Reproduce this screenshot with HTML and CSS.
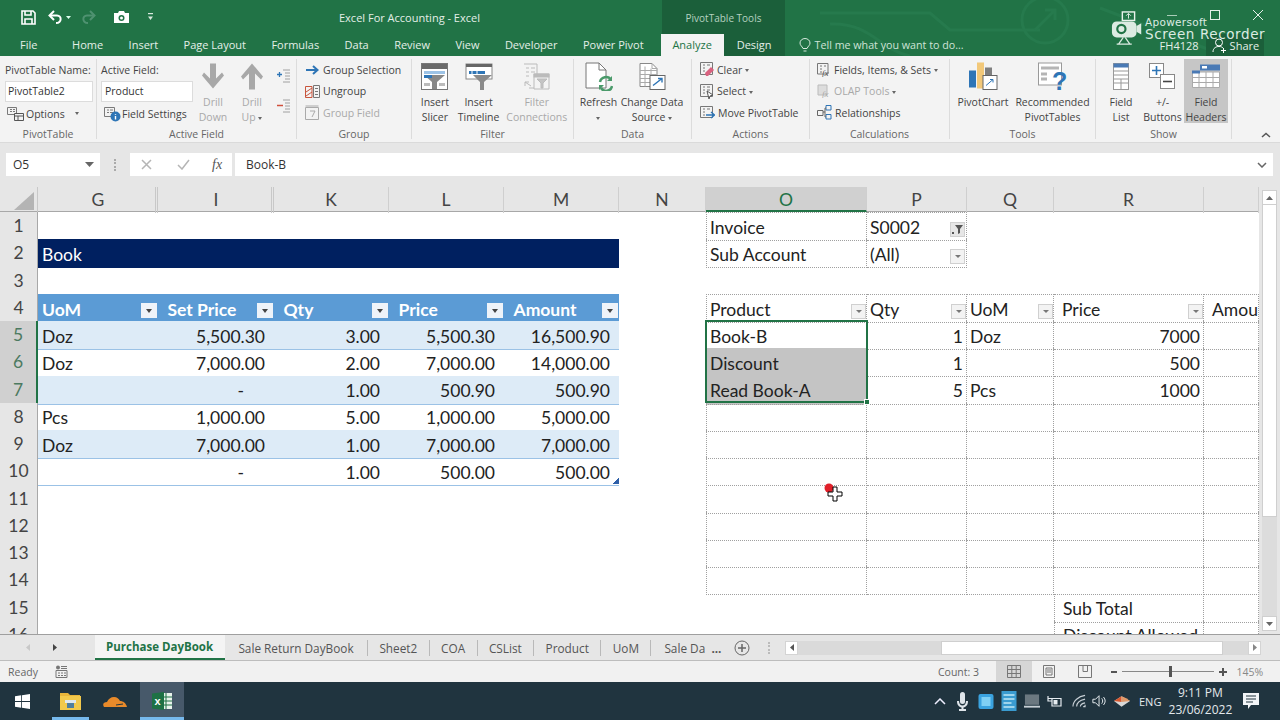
FILE: index.html
```html
<!DOCTYPE html>
<html lang="en">
<head>
<meta charset="utf-8">
<title>Excel For Accounting - Excel</title>
<link rel="stylesheet" href="styles.css">
</head>
<body>
<div class="app">
  <header class="chrome">
    <svg class="circuit" width="470" height="56" viewBox="0 0 470 56" fill="none" stroke="#267a4d" stroke-width="3"><path d="M10 13H120L140 30H230"/><path d="M20 24C60 22 70 50 100 56"/><circle cx="235" cy="20" r="23"/><path d="M225 30L245 10M235 10H245V20"/><path d="M290 8L400 50"/></svg>
    <div class="titlebar">
      <div class="title-left">
        <div class="qat">
          <svg class="q-save" width="15" height="15" viewBox="0 0 15 15" fill="none" stroke="#fff" stroke-width="1.6"><path d="M1 1H12L14 3V14H1Z"/><path d="M4 1V5H10V1M4 14V9H11V14"/></svg>
          <svg class="q-undo" width="24" height="15" viewBox="0 0 24 15" fill="none"><path d="M2 5.500H9C14 5.500 14 13 8 13" stroke="#fff" stroke-width="2"/><path d="M6 1L1.500 5.500L6 10" stroke="#fff" stroke-width="2"/><path d="M18 6H23L20.500 9Z" fill="#dfe"/></svg>
          <svg class="q-redo" width="24" height="15" viewBox="0 0 24 15" fill="none" stroke="#4f9271" stroke-width="2"><path d="M13 5.500H7C2 5.500 2 13 8 13"/><path d="M10 1L14.500 5.500L10 10"/></svg>
          <svg class="q-cam" width="17" height="14" viewBox="0 0 17 14"><path d="M1 3H5L6 1H11L12 3H16V13H1Z" fill="#fff"/><circle cx="8.500" cy="8" r="3" fill="#217346"/><circle cx="8.500" cy="8" r="1.500" fill="#fff"/></svg>
          <svg class="q-more" width="7" height="8" viewBox="0 0 7 8" fill="#d8e8de"><rect x="1" y="0" width="5" height="1.200"/><path d="M1 3.500H6L3.500 7Z"/></svg>
        </div>
        <div class="doc-title">Excel For Accounting - Excel</div>
      </div>
      <div class="context-title">PivotTable Tools</div>
      <div class="win-btns">
        <svg width="12" height="12" viewBox="0 0 12 12" stroke="#a9cdb8" fill="none"><path d="M1 6.500H11"/></svg>
        <svg width="12" height="12" viewBox="0 0 12 12" stroke="#e6f0ea" fill="none"><rect x="1.500" y="1.500" width="9" height="9"/></svg>
        <svg width="12" height="12" viewBox="0 0 12 12" stroke="#e6f0ea" fill="none"><path d="M1 1L11 11M11 1L1 11"/></svg>
      </div>
    </div>
    <nav class="tabs">
      <span class="tab tab-file">File</span><span class="tab">Home</span><span class="tab">Insert</span><span class="tab">Page Layout</span><span class="tab">Formulas</span><span class="tab">Data</span><span class="tab">Review</span><span class="tab">View</span><span class="tab">Developer</span><span class="tab tab-last">Power Pivot</span><span class="tab tab-active">Analyze</span><span class="tab tab-design">Design</span>
      <span class="tellme">
        <svg width="12" height="15" viewBox="0 0 12 15" fill="none" stroke="#d8eadf"><path d="M4 10.500C3 8 1 7.500 1 5A5 4.500 0 0 1 11 5C11 7.500 9 8 8 10.500ZM4.500 13H7.500"/></svg>
        Tell me what you want to do...
      </span>
      <span class="user">FH4128</span>
      <span class="share">
        <svg width="15" height="15" viewBox="0 0 15 15" fill="none" stroke="#fff"><circle cx="7" cy="4.500" r="3.500"/><path d="M1 14C1 10 4 8.500 7 8.500C9 8.500 10 9 11 10M9 12.500H14M11.500 10V15"/></svg>
        Share
      </span>
    </nav>
    <div class="watermark">
      <svg class="wm-cam" width="34" height="36" viewBox="0 0 36 36"><rect x="12" y="1" width="13" height="9" fill="none" stroke="#e9f3ec" stroke-width="1.500"/><path d="M18.500 8V3M16 5L18.500 2.500L21 5" fill="none" stroke="#e9f3ec"/><rect x="1" y="11" width="26" height="17" rx="5" fill="#dcebe2"/><path d="M27 16L32 13V25L27 22Z" fill="#dcebe2"/><circle cx="11" cy="19" r="5.500" fill="#217346"/><circle cx="11" cy="19" r="3.200" fill="#dcebe2"/><path d="M13 28L8 35M15 28L20 35M6 35H22" stroke="#dcebe2" fill="none" stroke-width="1.300"/></svg>
      <div class="wm-text"><span class="wm-a">Apowersoft</span><span class="wm-b">Screen Recorder</span></div>
    </div>
  </header>

  <section class="ribbon">
    <div class="grp g-pivot">
      <div class="grp-body col-body">
        <div class="row-item plain">PivotTable Name:</div>
        <div class="field f-name">PivotTable2</div>
        <div class="row-item opts">
          <svg width="17" height="15" viewBox="0 0 17 15" fill="none" stroke="#7a7a7a"><path d="M.5 1.500H9.500V8.500H.5ZM3 3.500H5M6 3.500H8M3 5.500H5M6 5.500H8"/><path d="M7.500 7.500H16.500V14.500H7.500ZM7.500 10H16.500M11 10V14.500" stroke="#555" fill="#f3f3f3"/></svg>
          <span>Options</span><i class="caret cap"></i>
        </div>
      </div>
      <div class="grp-label">PivotTable</div>
    </div>
    <div class="grp g-active">
      <div class="grp-body">
        <div class="col-body af-col">
          <div class="row-item plain">Active Field:</div>
          <div class="field f-prod">Product</div>
          <div class="row-item fset">
            <svg width="17" height="16" viewBox="0 0 17 16" fill="none" stroke="#7a7a7a"><path d="M.5 1.500H10.500V10.500H.5ZM3 4H5M6 4H9M3 6.500H5M6 6.500H9"/><circle cx="11.500" cy="10.500" r="5" fill="#2e75b6" stroke="none"/><path d="M11.500 8V8.800M11.500 10V13.500" stroke="#fff" stroke-width="1.400"/></svg>
            <span>Field Settings</span>
          </div>
        </div>
        <div class="big off b-drill1"><svg width="22" height="26" viewBox="0 0 22 26" fill="#a8a8a8"><path d="M8 0H14V15L20 9L22 12L11 25L0 12L2 9L8 15Z"/></svg><span>Drill<br>Down</span></div>
        <div class="big off b-drill2"><svg width="22" height="26" viewBox="0 0 22 26" fill="#a8a8a8"><path d="M8 26H14V10L20 16L22 13L11 0L0 13L2 16L8 10Z"/></svg><span>Drill<br>Up <i class="caret"></i></span></div>
        <div class="mini-col">
          <svg width="15" height="15" viewBox="0 0 15 15" fill="none" stroke="#a0a0a0"><path d="M7 2H14M9 5H14M9 8H14M9 11H14M7 14H14"/><path d="M1 6.500H6M3.500 4V9" stroke="#2e75b6" stroke-width="1.300"/></svg>
          <svg width="15" height="15" viewBox="0 0 15 15" fill="none" stroke="#a0a0a0"><path d="M7 2H14M9 5H14M9 8H14M9 11H14M7 14H14"/><path d="M1 7.500H7" stroke="#d0503c" stroke-width="1.500"/></svg>
        </div>
      </div>
      <div class="grp-label">Active Field</div>
    </div>
    <div class="grp g-group">
      <div class="grp-body col-body">
        <div class="row-item"><svg width="15" height="14" viewBox="0 0 15 14" fill="none" stroke="#2e75b6" stroke-width="2"><path d="M1 7H12M8 3L12.500 7L8 11"/></svg><span>Group Selection</span></div>
        <div class="row-item"><svg width="15" height="15" viewBox="0 0 15 15" fill="none"><path d="M.5 2.500H7V13.500H.5Z" stroke="#c8553d"/><path d="M1 8L7 4M1 12L7 8" stroke="#c8553d"/><path d="M8.500 1.500H14.500V13.500H8.500ZM10 4.500H13M10 7.500H13M10 10.500H13" stroke="#777"/></svg><span>Ungroup</span></div>
        <div class="row-item off"><svg width="15" height="15" viewBox="0 0 15 15" fill="none" stroke="#aaa"><path d="M.5 2.500H13.500V14.500H.5ZM.5 1H13.500M5 6H10L7 12"/></svg><span>Group Field</span></div>
      </div>
      <div class="grp-label">Group</div>
    </div>
    <div class="grp g-filter">
      <div class="grp-body">
        <div class="big b-slicer"><svg width="27" height="27" viewBox="0 0 27 27"><rect x=".5" y=".5" width="26" height="26" fill="#fff" stroke="#777"/><rect x="1" y="1" width="25" height="5" fill="#6a6a6a"/><rect x="3" y="8" width="21" height="3" fill="#9dc3e6"/><path d="M3 12H24L16 19V26H11V19Z" fill="#888"/><rect x="3" y="12" width="8" height="3" fill="#2e75b6"/><rect x="3" y="20" width="6" height="3" fill="#bbb"/><rect x="18" y="20" width="6" height="3" fill="#bbb"/></svg><span>Insert<br>Slicer</span></div>
        <div class="big b-timeline"><svg width="28" height="27" viewBox="0 0 28 27"><rect x="1" y="1" width="26" height="15" fill="#fff" stroke="#888"/><rect x="1" y="1" width="26" height="3" fill="#666"/><path d="M4 8H20V11H4Z" fill="#2e75b6"/><path d="M7 8V11M12 8V11" stroke="#fff"/><path d="M8 12H27L19 19V27H15V19Z" fill="#8a8a8a"/></svg><span>Insert<br>Timeline</span></div>
        <div class="big off b-conn"><svg width="27" height="27" viewBox="0 0 27 27" fill="none" stroke="#bbb"><path d="M1 1H14V25H6"/><path d="M3 5H6M8 5H12M3 9H6M8 9H12M3 13H6"/><path d="M11 11H26V26H11Z" fill="#f3f3f3"/><rect x="11" y="11" width="15" height="3" fill="#bbb"/><path d="M14 16H24L20 20V25H18V20Z" fill="#c4c4c4"/><path d="M8 23L2 19M2 23V19H6"/></svg><span>Filter<br>Connections</span></div>
      </div>
      <div class="grp-label">Filter</div>
    </div>
    <div class="grp g-data">
      <div class="grp-body">
        <div class="big b-refresh"><svg width="28" height="29" viewBox="0 0 28 29" fill="none"><path d="M1 1H14L21 8V26H1Z" fill="#fff" stroke="#777"/><path d="M14 1V8H21" stroke="#777"/><path d="M15 20A6 6 0 0 1 26 18M27 24A6 6 0 0 1 16 26" stroke="#4a9a6a" stroke-width="2.500"/><path d="M27 14V19H22M14 28V23H19" fill="#4a9a6a"/></svg><span>Refresh<br><i class="caret"></i></span></div>
        <div class="big b-change"><svg width="27" height="28" viewBox="0 0 27 28" fill="none" stroke="#888"><path d="M1 1H13L18 6V24H1Z" fill="#fff"/><path d="M13 1V6H18M1 8H18M1 12H18M1 16H18M1 20H18M6 4V24M12 6V24" stroke="#aaa"/><rect x="11" y="13" width="15" height="14" fill="#fff" stroke="#666"/><path d="M14 23L23 16M19 16H23V20" stroke="#2e75b6" stroke-width="1.400"/></svg><span>Change Data<br>Source <i class="caret"></i></span></div>
      </div>
      <div class="grp-label">Data</div>
    </div>
    <div class="grp g-actions">
      <div class="grp-body col-body">
        <div class="row-item"><svg width="14" height="15" viewBox="0 0 14 15" fill="none" stroke="#777"><path d="M.5 .5H12.500V12.500H.5ZM3 3H5M7 3H10M3 6H5M3 9H5"/><path d="M5 11L11 5L14 8L8 14H6Z" fill="#d9627f" stroke="none"/></svg><span>Clear <i class="caret"></i></span></div>
        <div class="row-item"><svg width="14" height="15" viewBox="0 0 14 15" fill="none" stroke="#777"><path d="M.5 .5H12.500V12.500H.5ZM3 3H5M7 3H10M3 6H5M3 9H5M7 6H10"/><path d="M7 7L13 11L10 12L9 15Z" fill="#fff" stroke="#555"/></svg><span>Select <i class="caret"></i></span></div>
        <div class="row-item"><svg width="15" height="14" viewBox="0 0 15 14" fill="none" stroke="#777"><path d="M.5 .5H12.500V11.500H.5ZM3 3H5M7 3H10M3 6H5M3 9H5"/><path d="M6 9H14M11 6L14.500 9L11 12" stroke="#2e75b6" stroke-width="1.300"/></svg><span>Move PivotTable</span></div>
      </div>
      <div class="grp-label">Actions</div>
    </div>
    <div class="grp g-calc">
      <div class="grp-body col-body">
        <div class="row-item"><svg width="14" height="14" viewBox="0 0 14 14" fill="none" stroke="#777"><path d="M.5 .5H11V11H.5ZM3 3H5M7 3H9M3 6H5M3 9H5"/><text x="5" y="13" class="fx-mini">fx</text></svg><span>Fields, Items, &amp; Sets <i class="caret"></i></span></div>
        <div class="row-item off"><svg width="14" height="14" viewBox="0 0 14 14" fill="none" stroke="#bbb"><path d="M1 1H10V11H1Z" fill="#ddd"/><text x="5" y="13" class="fx-mini off-fx">fx</text></svg><span>OLAP Tools <i class="caret"></i></span></div>
        <div class="row-item"><svg width="15" height="15" viewBox="0 0 15 15" fill="none" stroke="#666"><path d="M.5 5.500H6V10.500H.5Z"/><path d="M9 .5H14V5H9ZM9 9.500H14V14H9Z" stroke="#2e75b6"/><path d="M6 7H8M8 3V12H9M8 3H9"/></svg><span>Relationships</span></div>
      </div>
      <div class="grp-label">Calculations</div>
    </div>
    <div class="grp g-tools">
      <div class="grp-body">
        <div class="big b-chart"><svg width="29" height="28" viewBox="0 0 29 28"><rect x="0" y="8" width="7" height="17" fill="#2e75b6"/><rect x="8" y="0" width="7" height="26" fill="#f2c879"/><rect x="16" y="5" width="7" height="8" fill="#7f7f7f"/><rect x="14" y="13" width="14" height="14" fill="#fff" stroke="#666"/><path d="M17 23L24 17M21 17H24V20" stroke="#2e75b6" fill="none"/></svg><span>PivotChart</span></div>
        <div class="big b-recom"><svg width="29" height="28" viewBox="0 0 29 28" fill="none"><rect x=".5" y=".5" width="23" height="22" fill="#fff" stroke="#999"/><path d="M3 4H21V7H3ZM3 10H9V13H3ZM3 15H9V18H3Z" fill="#b5b5b5"/><text x="14" y="27" class="qmark">?</text></svg><span>Recommended<br>PivotTables</span></div>
      </div>
      <div class="grp-label">Tools</div>
    </div>
    <div class="grp g-show">
      <div class="grp-body">
        <div class="big b-flist"><svg width="16" height="27" viewBox="0 0 16 27" fill="#fff" stroke="#999"><rect x=".5" y=".5" width="15" height="26"/><rect x=".5" y=".5" width="15" height="4" fill="#4a7ab5" stroke="none"/><path d="M1 8H15M1 12H15M1 16H15M1 20H15M8 16V26" fill="none"/></svg><span>Field<br>List</span></div>
        <div class="big b-btns"><svg width="27" height="27" viewBox="0 0 27 27" fill="#fff" stroke="#888"><rect x=".5" y=".5" width="14" height="14"/><rect x="11.500" y="11.500" width="14" height="14"/><path d="M3 7.500H12M7.500 3V12" stroke="#2e75b6" stroke-width="1.600" fill="none"/><path d="M14 18.500H23" stroke="#444" stroke-width="1.600" fill="none"/></svg><span>+/-<br>Buttons</span></div>
        <div class="big b-fhead"><svg width="28" height="24" viewBox="0 0 28 24" fill="#fff" stroke="#aaa"><path d="M.5 7.500H27.500V23H.5ZM.5 13H27.500M.5 18H27.500M7 7.500V23M14 7.500V23M21 7.500V23"/><rect x="0" y="6" width="8" height="3" fill="#4a7ab5" stroke="none"/><rect x="8" y="0" width="20" height="6" fill="#4a7ab5" stroke="none"/><rect x="10" y="1.500" width="5" height="2.500" fill="#fff" stroke="none"/></svg><span>Field<br>Headers</span></div>
      </div>
      <div class="grp-label">Show</div>
    </div>
    <div class="collapse"><svg width="10" height="6" viewBox="0 0 10 6" fill="none" stroke="#555" stroke-width="1.500"><path d="M1 5L5 1.500L9 5"/></svg></div>
  </section>

  <section class="fbar">
    <div class="namebox"><span>O5</span><svg width="9" height="5" viewBox="0 0 9 5" fill="#666"><path d="M0 0H9L4.500 5Z"/></svg></div>
    <div class="fdots"></div>
    <div class="fbtns">
      <svg width="11" height="11" viewBox="0 0 11 11" fill="none" stroke="#b5b5b5" stroke-width="1.500"><path d="M1 1L10 10M10 1L1 10"/></svg>
      <svg width="13" height="11" viewBox="0 0 13 11" fill="none" stroke="#b5b5b5" stroke-width="1.500"><path d="M1 6L5 10L12 1"/></svg>
      <i class="fx">fx</i>
    </div>
    <div class="finput"><span>Book-B</span><svg width="10" height="6" viewBox="0 0 10 6" fill="none" stroke="#666" stroke-width="1.500"><path d="M1 1L5 5L9 1"/></svg></div>
  </section>

  <section class="sheet">
    <div class="grid">
      <div class="row hdr">
        <div class="corner"><svg width="20" height="18" viewBox="0 0 20 18"><path d="M20 0V18H0Z" fill="#b4b4b4"/></svg></div>
        <div class="ch ch-hid">G</div><div class="ch ch-hid">I</div><div class="ch">K</div><div class="ch">L</div><div class="ch">M</div><div class="ch">N</div><div class="ch ch-sel">O</div><div class="ch">P</div><div class="ch">Q</div><div class="ch">R</div><div class="ch"></div>
      </div>

      <div class="row"><div class="rh">1</div><div class="c"></div><div class="c"></div><div class="c"></div><div class="c"></div><div class="c"></div><div class="c"></div><div class="c p pl pt">Invoice</div><div class="c p pt val">S0002<i class="fbtn filt"><svg width="11" height="9" viewBox="0 0 11 9"><path d="M3 0H11L8 4V8L6 9V4Z" fill="#555"/><rect x="0" y="7" width="2" height="2" fill="#555"/></svg></i></div><div class="c"></div><div class="c"></div><div class="c"></div></div>
      <div class="row"><div class="rh">2</div><div class="c band-book">Book</div><div class="c"></div><div class="c p pl">Sub Account</div><div class="c p val">(All)<i class="fbtn"><b></b></i></div><div class="c"></div><div class="c"></div><div class="c"></div></div>
      <div class="row"><div class="rh">3</div><div class="c"></div><div class="c"></div><div class="c"></div><div class="c"></div><div class="c"></div><div class="c"></div><div class="c"></div><div class="c"></div><div class="c"></div><div class="c"></div><div class="c"></div></div>
      <div class="row"><div class="rh">4</div><div class="c th">UoM<i class="tbtn"><b></b></i></div><div class="c th">Set Price<i class="tbtn"><b></b></i></div><div class="c th">Qty<i class="tbtn"><b></b></i></div><div class="c th">Price<i class="tbtn"><b></b></i></div><div class="c th">Amount<i class="tbtn"><b></b></i></div><div class="c"></div><div class="c p pl pt ph">Product<i class="fbtn"><b></b></i></div><div class="c p pt ph">Qty<i class="fbtn"><b></b></i></div><div class="c p pt ph">UoM<i class="fbtn"><b></b></i></div><div class="c p pt ph in">Price<i class="fbtn"><b></b></i></div><div class="c p pt ph clip">Amount</div></div>

      <div class="row"><div class="rh rh-sel">5</div><div class="c td odd">Doz</div><div class="c td odd n">5,500.30</div><div class="c td odd n">3.00</div><div class="c td odd n">5,500.30</div><div class="c td odd n">16,500.90</div><div class="c"></div><div class="c p pl">Book-B</div><div class="c p r">1</div><div class="c p">Doz</div><div class="c p r">7000</div><div class="c p"></div></div>
      <div class="row"><div class="rh rh-sel">6</div><div class="c td">Doz</div><div class="c td n">7,000.00</div><div class="c td n">2.00</div><div class="c td n">7,000.00</div><div class="c td n">14,000.00</div><div class="c"></div><div class="c p pl sel">Discount</div><div class="c p r">1</div><div class="c p"></div><div class="c p r">500</div><div class="c p"></div></div>
      <div class="row"><div class="rh rh-sel">7</div><div class="c td odd"></div><div class="c td odd n dash">-</div><div class="c td odd n">1.00</div><div class="c td odd n">500.90</div><div class="c td odd n">500.90</div><div class="c"></div><div class="c p pl sel">Read Book-A</div><div class="c p r">5</div><div class="c p">Pcs</div><div class="c p r">1000</div><div class="c p"></div></div>
      <div class="row"><div class="rh">8</div><div class="c td">Pcs</div><div class="c td n">1,000.00</div><div class="c td n">5.00</div><div class="c td n">1,000.00</div><div class="c td n">5,000.00</div><div class="c"></div><div class="c p pl"></div><div class="c p"></div><div class="c p"></div><div class="c p"></div><div class="c p"></div></div>
      <div class="row"><div class="rh">9</div><div class="c td odd">Doz</div><div class="c td odd n">7,000.00</div><div class="c td odd n">1.00</div><div class="c td odd n">7,000.00</div><div class="c td odd n">7,000.00</div><div class="c"></div><div class="c p pl"></div><div class="c p"></div><div class="c p"></div><div class="c p"></div><div class="c p"></div></div>
      <div class="row"><div class="rh">10</div><div class="c td"></div><div class="c td n dash">-</div><div class="c td n">1.00</div><div class="c td n">500.00</div><div class="c td n">500.00</div><div class="c"></div><div class="c p pl"></div><div class="c p"></div><div class="c p"></div><div class="c p"></div><div class="c p"></div></div>
      <div class="row"><div class="rh">11</div><div class="c"></div><div class="c"></div><div class="c"></div><div class="c"></div><div class="c"></div><div class="c"></div><div class="c p pl"></div><div class="c p"></div><div class="c p"></div><div class="c p"></div><div class="c p"></div></div>
      <div class="row"><div class="rh">12</div><div class="c"></div><div class="c"></div><div class="c"></div><div class="c"></div><div class="c"></div><div class="c"></div><div class="c p pl"></div><div class="c p"></div><div class="c p"></div><div class="c p"></div><div class="c p"></div></div>
      <div class="row"><div class="rh">13</div><div class="c"></div><div class="c"></div><div class="c"></div><div class="c"></div><div class="c"></div><div class="c"></div><div class="c p pl"></div><div class="c p"></div><div class="c p"></div><div class="c p"></div><div class="c p"></div></div>
      <div class="row"><div class="rh">14</div><div class="c"></div><div class="c"></div><div class="c"></div><div class="c"></div><div class="c"></div><div class="c"></div><div class="c p pl"></div><div class="c p"></div><div class="c p"></div><div class="c p"></div><div class="c p"></div></div>
      <div class="row"><div class="rh">15</div><div class="c"></div><div class="c"></div><div class="c"></div><div class="c"></div><div class="c"></div><div class="c"></div><div class="c"></div><div class="c"></div><div class="c"></div><div class="c p pl in">Sub Total</div><div class="c p"></div></div>
      <div class="row"><div class="rh">16</div><div class="c"></div><div class="c"></div><div class="c"></div><div class="c"></div><div class="c"></div><div class="c"></div><div class="c"></div><div class="c"></div><div class="c"></div><div class="c p pl in">Discount Allowed</div><div class="c p"></div></div>

      <div class="selection"><i class="handle"></i></div>
      <i class="tbl-handle"></i>
      <svg class="cursor" width="20" height="20" viewBox="0 0 20 20"><circle cx="5" cy="5" r="4.500" fill="#e0202a"/><path d="M9 4H13V9H18V13H13V18H9V13H4V9H9Z" fill="#fff" stroke="#000"/></svg>
    </div>
    <div class="vscroll">
      <div class="sb-btn"><svg width="7" height="4" viewBox="0 0 7 4" fill="#666"><path d="M0 4H7L3.500 0Z"/></svg></div>
      <div class="sb-thumb"></div>
      <div class="sb-track"></div>
      <div class="sb-btn"><svg width="7" height="4" viewBox="0 0 7 4" fill="#666"><path d="M0 0H7L3.500 4Z"/></svg></div>
    </div>
  </section>

  <section class="sheettabs">
    <div class="st-nav"><svg width="4" height="7" viewBox="0 0 4 7" fill="#c8c8c8"><path d="M4 0V7L0 3.500Z"/></svg><svg width="4" height="7" viewBox="0 0 4 7" fill="#444"><path d="M0 0V7L4 3.500Z"/></svg></div>
    <div class="st st-active">Purchase DayBook</div>
    <div class="st st-wide">Sale Return DayBook</div>
    <div class="st">Sheet2</div>
    <div class="st">COA</div>
    <div class="st">CSList</div>
    <div class="st">Product</div>
    <div class="st">UoM</div>
    <div class="st st-end">Sale Da</div>
    <div class="st-more">...</div>
    <svg class="st-add" width="16" height="16" viewBox="0 0 16 16" fill="none" stroke="#666"><circle cx="8" cy="8" r="7"/><path d="M4 8H12M8 4V12" stroke-width="1.500"/></svg>
    <div class="st-dots"></div>
    <div class="hscroll">
      <div class="hb"><svg width="4" height="7" viewBox="0 0 4 7" fill="#555"><path d="M4 0V7L0 3.500Z"/></svg></div>
      <div class="h-track"></div>
      <div class="h-thumb"></div>
      <div class="h-track2"></div>
      <div class="hb"><svg width="4" height="7" viewBox="0 0 4 7" fill="#888"><path d="M0 0V7L4 3.500Z"/></svg></div>
    </div>
  </section>

  <footer class="status">
    <span class="ready">Ready</span>
    <svg width="13" height="13" viewBox="0 0 13 13" fill="none" stroke="#777"><path d="M1 5.500H12V12.500H1ZM3 8H5M6 8H8M9 8H11M3 10.500H5M6 10.500H8M9 10.500H11"/><circle cx="3" cy="2.500" r="2" fill="#777" stroke="none"/><path d="M6 1.500H12M6 3.500H12"/></svg>
    <span class="count">Count: 3</span>
    <div class="views">
      <div class="vbtn vbtn-on"><svg width="14" height="13" viewBox="0 0 14 13" fill="none" stroke="#777"><path d="M.5 .5H13.500V12.500H.5ZM.5 4.500H13.500M.5 8.500H13.500M4.800 .5V12.500M9.200 .5V12.500"/></svg></div>
      <div class="vbtn"><svg width="12" height="13" viewBox="0 0 12 13" fill="none" stroke="#777"><path d="M.5 .5H11.500V12.500H.5ZM3 3H9V10H3ZM4 5H8M4 7H8"/></svg></div>
      <div class="vbtn"><svg width="14" height="13" viewBox="0 0 14 13" fill="none" stroke="#777"><path d="M.5 .5H13.500V12.500H.5ZM5 .5V6.500H9.500V.5"/></svg></div>
    </div>
    <div class="zoomer">
      <i class="z-minus"></i>
      <div class="z-slider"><i class="z-thumb"></i></div>
      <i class="z-plus"></i>
      <span class="z-val">145%</span>
    </div>
  </footer>

  <footer class="taskbar">
    <svg class="t-win" width="15" height="15" viewBox="0 0 15 15" fill="#fff"><path d="M0 2.200L6.200 1.300V7H0ZM7 1.200L15 0V7H7ZM0 8H6.200V13.700L0 12.800ZM7 8H15V15L7 13.800Z"/></svg>
    <div class="t-app t-open"><svg width="21" height="18" viewBox="0 0 21 18"><path d="M0 1H8L10 3H20V5H0Z" fill="#e8b53a"/><rect x="0" y="4" width="21" height="14" fill="#f2c94c"/><rect x="7" y="11" width="7" height="5" fill="#4f7ea0"/><rect x="5" y="8" width="11" height="3" fill="#e0e8ef"/></svg></div>
    <div class="t-app"><svg width="24" height="11" viewBox="0 0 24 11"><path d="M1 11C-1 8 1 6 4 6C5 3 8 1 11 1C14 1 16 3 17 5C20 5 23 7 24 11Z" fill="#e88a2a"/><path d="M13 9L20 8" stroke="#1f3540" stroke-width="1"/></svg></div>
    <div class="t-app t-excel"><svg width="20" height="18" viewBox="0 0 20 18"><rect x="8" y="1" width="12" height="16" fill="#e9f3ec"/><path d="M14 1V17M8 5H20M8 9H20M8 13H20" stroke="#217346"/><path d="M0 1.500L12 0V18L0 16.500Z" fill="#1e7145"/><text x="2.500" y="13" class="xl">x</text></svg></div>
    <div class="tray">
      <svg width="12" height="7" viewBox="0 0 12 7" fill="none" stroke="#eef" stroke-width="1.500"><path d="M1 6L6 1L11 6"/></svg>
      <svg width="11" height="19" viewBox="0 0 11 19" fill="#dfe5ea"><rect x="3" y="0" width="5" height="12" rx="2.500"/><path d="M0 9H2C2 15 9 15 9 9H11C11 13 9 15 6.500 15.500V17H9V19H2V17H4.500V15.500C2 15 0 13 0 9Z"/></svg>
      <svg width="16" height="15" viewBox="0 0 15 15"><rect width="15" height="15" rx="2" fill="#3aa3e0"/><rect x="3" y="3" width="9" height="9" fill="#7fd0f5"/></svg>
      <svg width="16" height="20" viewBox="0 0 15 20"><rect width="15" height="20" fill="#3a9bd0"/><path d="M2 4H13M2 8H13M2 12H10M2 16H13" stroke="#bfe7f5" stroke-width="1.500"/></svg>
      <svg width="16" height="15" viewBox="0 0 17 15"><rect x="1" y="0" width="15" height="11" fill="#6b7880"/><rect x="0" y="12" width="17" height="2" fill="#c8d0d6"/></svg>
      <svg width="15" height="13" viewBox="0 0 15 13" fill="none" stroke="#e6ecf0"><path d="M5 3.500H14V11H5ZM1 1V6H5M1 3.500H5" stroke-width="1.200"/><rect x="7" y="5.500" width="3" height="3.500" fill="#e6ecf0"/></svg>
      <svg width="14" height="14" viewBox="0 0 15 14" fill="none" stroke="#c8d0d6" stroke-width="1.200"><path d="M1 13C1 7 7 2 14 1M5 13C5 9 9 6 14 5M9 13C9 11 11 9.500 14 9"/><path d="M12 13H14V11"/></svg>
      <svg width="15" height="14" viewBox="0 0 17 14" fill="none" stroke="#e6ecf0" stroke-width="1.100"><path d="M1 5H4L8 1V13L4 9H1ZM11 4C12.500 6 12.500 8 11 10M13 2.500C15.500 5.500 15.500 8.500 13 11.500"/></svg>
      <svg width="16" height="13" viewBox="0 0 17 13"><path d="M0 6L8 1L17 6L8 12Z" fill="#d8d8d8"/><path d="M0 6L8 1V7Z" fill="#d9562c"/><path d="M8 7L17 6L13 3L8 1Z" fill="#e09a6a"/></svg>
      <span class="eng">ENG</span>
    </div>
    <div class="clock"><span>9:11 PM</span><span>23/06/2022</span></div>
    <svg class="t-note" width="16" height="17" viewBox="0 0 16 17" fill="#f2f5f7"><path d="M0 0H16V12H8L5 16V12H0Z"/><path d="M3 3H13M3 6H13M3 9H10" stroke="#20343f" stroke-width="1.200"/></svg>
  </footer>
</div>
</body>
</html>
```
FILE: styles.css
```css
* { box-sizing: border-box; }
html, body { margin: 0; padding: 0; }
body { width: 1280px; height: 720px; overflow: hidden; background: #e6e6e6; font-family: "Open Sans", "Liberation Sans", sans-serif; }
i { font-style: normal; }
svg { display: block; flex: none; }
.app { display: flex; flex-direction: column; width: 1280px; height: 720px; }

/* Window chrome */
.chrome { position: relative; height: 56px; background: #217346; color: #fff; flex: none; overflow: hidden; }
.circuit { position: absolute; left: 810px; top: 0; }
.titlebar { position: relative; display: flex; height: 34px; }
.title-left { width: 662px; display: flex; align-items: center; }
.qat { display: flex; align-items: center; padding-left: 21px; width: 339px; }
.q-undo { margin-left: 12px; }
.q-redo { margin-left: 8px; }
.q-cam { margin-left: 9px; }
.q-more { margin-left: 17px; }
.doc-title { font-size: 11px; color: #e4efe8; white-space: nowrap; }
.context-title { width: 123px; background: #1b5f3a; color: #b5d2c0; font-size: 10px; text-align: center; line-height: 36px; }
.win-btns { margin-left: auto; display: flex; align-items: center; gap: 31px; padding-right: 16px; padding-bottom: 5px; }
.tabs { position: relative; display: flex; height: 22px; align-items: center; font-size: 11px; color: #e4efe8; }
.tab { padding: 0 12.700px; line-height: 22px; white-space: nowrap; }
.tab-file { padding: 0 22px 0 20px; }
.tab-last { padding-right: 17px; }
.tab-active { background: #f3f3f3; color: #217346; width: 63px; text-align: center; padding: 0; }
.tab-design { background: #1b5f3a; width: 61px; text-align: center; padding: 0; }
.tellme { display: flex; align-items: center; gap: 4px; margin-left: 14px; width: 361px; color: #cfe3d7; font-size: 10.700px; }
.user { width: 46px; font-size: 11px; }
.share { display: flex; align-items: center; gap: 3px; background: #1b5f3a; height: 22px; padding: 0 6px; width: 58px; font-size: 11px; }
.watermark { position: absolute; left: 1111px; top: 10px; display: flex; }
.wm-text { display: flex; flex-direction: column; font-family: "DejaVu Sans", sans-serif; color: #dcebe2; padding-top: 7px; }
.wm-a { font-size: 10.500px; line-height: 11px; letter-spacing: .3px; }
.wm-b { font-size: 13.500px; line-height: 13px; letter-spacing: .6px; white-space: nowrap; }

/* Ribbon */
.ribbon { position: relative; display: flex; height: 87px; flex: none; background: #f3f3f3; color: #444; font-size: 10.500px; border-bottom: 1px solid #dadada; line-height: 14px; }
.grp { display: flex; flex-direction: column; border-right: 1px solid #dcdcdc; margin: 3px 0; white-space: nowrap; }
.grp-body { flex: 1; display: flex; min-height: 0; }
.grp-label { height: 12px; text-align: center; line-height: 15px; color: #666; font-size: 10.500px; }
.col-body { display: flex; flex-direction: column; }
.g-pivot { width: 97px; }
.g-pivot .grp-body { padding-left: 5px; }
.g-active { width: 200px; }
.g-active .grp-body { padding-left: 4px; }
.g-group { width: 115px; }
.g-group .grp-body { padding-left: 8px; }
.g-filter { width: 162px; }
.g-data { width: 118px; }
.g-actions { width: 118px; }
.g-actions .grp-body { padding-left: 8px; }
.g-calc { width: 140px; }
.g-calc .grp-body { padding-left: 7px; }
.g-tools { width: 146px; }
.g-show { width: 136px; }
.row-item { display: flex; align-items: center; gap: 3px; height: 21.600px; }
.row-item.plain { height: 22px; }
.off { color: #a9a9a9; }
.field { background: #fff; border: 1px solid #dcdcdc; height: 21px; line-height: 19px; padding-left: 3px; color: #333; }
.f-name { width: 88px; margin-bottom: 1px; padding-left: 2px; }
.af-col { width: 96px; }
.f-prod { width: 92px; margin-bottom: 1px; }
.opts { padding-left: 2px; gap: 2px; }
.fset { padding-left: 3px; gap: 1px; width: 96px; }
.caret { display: inline-block; width: 0; height: 0; border-left: 2.500px solid transparent; border-right: 2.500px solid transparent; border-top: 3px solid #666; vertical-align: middle; }
.cap { margin-left: 8px; }
.big { display: flex; flex-direction: column; align-items: center; text-align: center; padding-top: 3px; }
.big svg { height: 29px; }
.big span { display: block; margin-top: 4px; line-height: 15px; }
.b-drill1 { width: 32px; }
.b-drill2 { width: 32px; margin-left: 7px; }
.mini-col { display: flex; flex-direction: column; gap: 15px; padding: 9px 0 0 8px; }
.b-slicer { width: 44px; margin-left: 1px; }
.b-timeline { width: 44px; }
.b-conn { width: 73px; }
.b-refresh { width: 49px; }
.b-change { width: 64px; margin-left: -3px; }
.b-chart { width: 66px; }
.b-recom { width: 73px; }
.b-flist { width: 50px; }
.b-btns { width: 43px; margin-left: -5px; }
.b-fhead { width: 44px; background: #c6c6c6; height: 64px; }
.fx-mini { font: italic 9px "Liberation Serif", serif; fill: #555; stroke: none; }
.off-fx { fill: #aaa; }
.qmark { font: bold 25px "Liberation Sans", sans-serif; fill: #2e75b6; stroke: none; }
.collapse { position: absolute; left: 1261px; top: 76px; }

/* Formula bar */
.fbar { display: flex; height: 44px; flex: none; align-items: flex-start; padding: 10px 7px 0 6px; background: #e6e6e6; font-size: 12px; color: #333; }
.namebox { display: flex; justify-content: space-between; align-items: center; width: 94px; height: 23px; background: #fff; padding: 0 6px 0 7px; }
.fdots { width: 2px; height: 12px; margin: 6px 14px 0 14px; border-left: 2px dotted #aaa; }
.fbtns { display: flex; align-items: center; width: 102px; height: 23px; background: #fff; padding-left: 11px; gap: 25px; }
.fx { font: italic 14px "Liberation Serif", serif; color: #555; margin-left: -3px; }
.finput { flex: 1; display: flex; justify-content: space-between; align-items: center; height: 23px; margin-left: 3px; background: #fff; padding: 0 6px 0 11px; }

/* Sheet */
.sheet { display: flex; flex: none; height: 448px; overflow: hidden; border-bottom: 1px solid #9f9f9f; background: #fff; }
.grid { position: relative; width: 1259px; height: 448px; overflow: hidden; font-family: "Lato", sans-serif; font-size: 17.500px; color: #222; }
.row { display: grid; grid-template-columns: 38px 120px 116px 115px 115px 115px 87px 161px 100px 87px 150px 55px; height: 27.250px; }
.hdr { height: 25px; background: #e6e6e6; border-bottom: 1px solid #a8a8a8; }
.corner { display: flex; align-items: flex-end; justify-content: flex-end; padding: 0 3px 3px 0; border-right: 1px solid #c8c8c8; }
.ch { text-align: center; line-height: 26px; color: #444; border-right: 1px solid #cfcfcf; }
.ch-hid { border-right: 3px double #c8c8c8; padding-left: 3px; }
.ch-sel { background: #d0d0d0; color: #217346; border-bottom: 2px solid #217346; height: 25px; }
.rh { background: #e6e6e6; border-right: 1px solid #a8a8a8; border-bottom: 1px solid #cfcfcf; text-align: center; line-height: 28px; color: #444; width: 38px; }
.rh-sel { background: #d0d0d0; color: #4c7a60; border-right: 2px solid #217346; }
.c { display: flex; align-items: center; min-width: 0; white-space: nowrap; padding: 2px 3px 0 4px; position: relative; overflow: hidden; }
.band-book { grid-column: span 5; background: #002060; color: #fff; }
.p { border-right: 1px dotted #a0a0a0; border-bottom: 1px dotted #a0a0a0; padding-left: 3px; }
.pl { border-left: 1px dotted #a0a0a0; }
.pt { border-top: 1px dotted #a0a0a0; }
.val { justify-content: space-between; padding-right: 1px; }
.r { justify-content: flex-end; }
.ph { justify-content: space-between; padding-right: 0; }
.in { padding-left: 8px; }
.clip { justify-content: flex-start; padding-left: 8px; }
.sel { background: #c4c4c4; }
.th { background: #5b9bd5; color: #fff; font-weight: 700; justify-content: space-between; padding-right: 1px; }
.th + .th { padding-left: 9.500px; }
.td { border-bottom: 1px solid #9bc2e6; }
.odd { background: #ddebf7; }
.n { justify-content: flex-end; padding-right: 9px; }
.dash { padding-right: 30px; }
.tbtn { display: flex; align-items: center; justify-content: center; width: 16px; height: 15px; background: #eef3f9; margin-top: 3px; flex: none; }
.tbtn b { width: 0; height: 0; border-left: 3.500px solid transparent; border-right: 3.500px solid transparent; border-top: 4px solid #444; }
.fbtn { display: flex; align-items: center; justify-content: center; width: 15px; height: 15px; background: #f3f3f3; border: 1px solid #d0d0d0; margin-top: 4px; flex: none; }
.fbtn b { width: 0; height: 0; border-left: 3px solid transparent; border-right: 3px solid transparent; border-top: 3.500px solid #777; }
.filt { background: #e6e6e6; }
.selection { position: absolute; left: 705px; top: 133px; width: 163px; height: 83px; border: 2px solid #217346; pointer-events: none; }
.handle { position: absolute; right: -4px; bottom: -4px; width: 6px; height: 6px; background: #217346; border: 1px solid #fff; }
.tbl-handle { position: absolute; left: 613px; top: 291px; width: 6px; height: 6px; background: linear-gradient(135deg, transparent 45%, #2e5fa8 45%); }
.cursor { position: absolute; left: 824px; top: 296px; }
.vscroll { width: 21px; display: flex; flex-direction: column; background: #e6e6e6; padding: 3px; }
.sb-btn { height: 15px; background: #fff; border: 1px solid #cfcfcf; display: flex; align-items: center; justify-content: center; flex: none; }
.sb-thumb { height: 312px; background: #fff; border: 1px solid #cfcfcf; border-top: 0; flex: none; }
.sb-track { flex: 1; background: #dcdcdc; }

/* Sheet tabs */
.sheettabs { display: flex; align-items: center; flex: none; height: 26px; background: #e6e6e6; font-size: 11.800px; color: #555; border-bottom: 1px solid #bdbdbd; }
.st-nav { display: flex; width: 95px; padding-left: 26px; gap: 23px; align-items: center; }
.st { height: 16px; line-height: 16px; padding: 0 11.400px; border-right: 1px solid #b9b9b9; white-space: nowrap; }
.st-wide { padding: 0 13.400px 0 12.400px; }
.st-active { height: 25px; line-height: 24px; padding: 0 0 0 11px; width: 130px; background: #f4f4f4; color: #217346; font-weight: 700; font-size: 11.500px; border: 0; border-bottom: 2px solid #217346; margin-right: 1px; }
.st-end { border-right: 0; width: 54px; overflow: hidden; padding-right: 0; padding-left: 13px; }
.st-more { width: 26px; padding-left: 6px; font-weight: 700; color: #555; }
.st-add { margin-left: 3px; }
.st-dots { width: 2px; height: 12px; margin-left: 18px; border-left: 2px dotted #bbb; }
.hscroll { display: flex; align-items: center; margin-left: 15px; height: 14px; }
.hb { width: 13px; height: 14px; background: #fff; border: 1px solid #d4d4d4; display: flex; align-items: center; justify-content: center; flex: none; }
.h-track { width: 143px; height: 14px; background: #dadada; }
.h-thumb { width: 282px; height: 14px; background: #fff; border: 1px solid #cfcfcf; }
.h-track2 { width: 25px; height: 14px; background: #dadada; }

/* Status bar */
.status { display: flex; align-items: center; flex: none; height: 21px; background: #f1f1f1; color: #666; font-size: 10.500px; position: relative; }
.ready { margin-left: 8px; width: 47px; }
.count { margin-left: 870px; width: 58px; white-space: nowrap; }
.views { display: flex; height: 21px; }
.vbtn { width: 35.500px; display: flex; align-items: center; justify-content: center; }
.vbtn-on { background: #d6d6d6; }
.zoomer { display: flex; align-items: center; margin-left: 8px; }
.z-minus { width: 6px; height: 2px; background: #555; }
.z-slider { position: relative; width: 92px; height: 1px; background: #888; margin: 0 5px; }
.z-thumb { position: absolute; left: 47px; top: -5px; width: 3px; height: 11px; background: #555; }
.z-plus { width: 8px; height: 8px; background: linear-gradient(#555, #555) center/8px 2px no-repeat, linear-gradient(#555, #555) center/2px 8px no-repeat; }
.z-val { margin-left: 10px; color: #888; }

/* Taskbar */
.taskbar { display: flex; align-items: center; flex: 1; background: #20343f; color: #e4e9ec; }
.t-win { margin-left: 15px; }
.t-app { height: 38px; display: flex; align-items: center; justify-content: center; border-bottom: 3px solid transparent; padding-top: 3px; }
.t-open { width: 37px; margin-left: 22px; border-bottom-color: #76b9ed; }
.t-app:nth-child(3) { width: 51px; }
.t-excel { width: 44px; background: #47596a; border-bottom-color: #76b9ed; }
.xl { font: bold 11px "Liberation Sans", sans-serif; fill: #fff; }
.tray { display: flex; align-items: center; gap: 7px; margin-left: 750px; }
.tray svg:nth-child(1) { margin-right: 4px; }
.tray svg:nth-child(2) { margin-right: 3px; }
.tray svg:nth-child(6) { margin-right: 3px; }
.tray svg:nth-child(7) { margin-right: -1px; }
.tray svg:nth-child(9) { margin-right: 2px; }
.eng { font-size: 11px; }
.clock { display: flex; flex-direction: column; align-items: center; width: 58px; margin-left: 10px; font-size: 12px; line-height: 17px; }
.t-note { margin-left: 14px; }
```
